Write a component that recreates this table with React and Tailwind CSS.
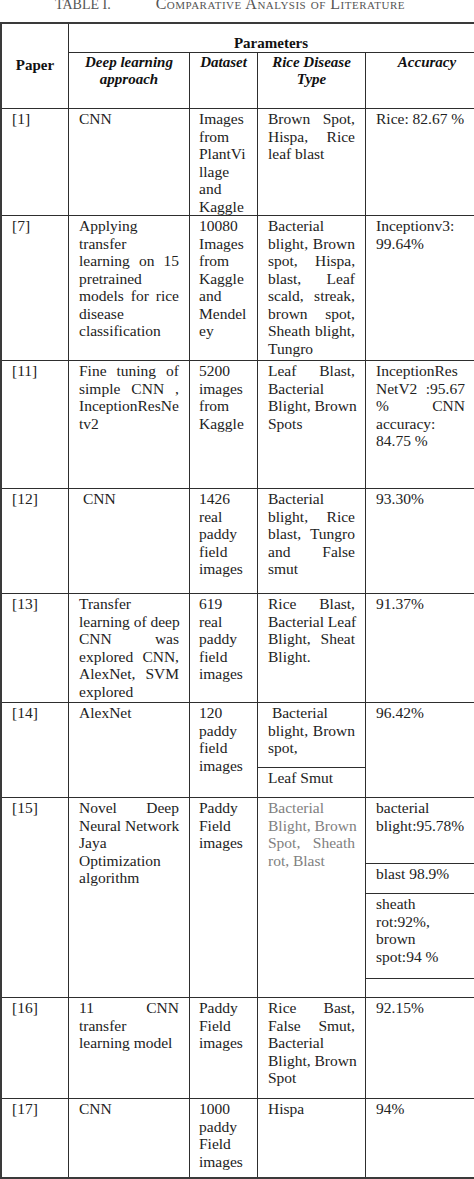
const line = 'border-[#2e2e2e]'

const Lines = ({ lines }) =>
  lines.map((l, i) =>
    l.startsWith('~') ? (
      <div key={i} className="whitespace-pre text-justify [text-align-last:justify]">
        {l.slice(1)}
      </div>
    ) : (
      <div key={i} className="whitespace-pre">
        {l}
      </div>
    )
  )

const rows = [
  {
    h: 'h-[107px]',
    paper: '[1]',
    approach: ['CNN'],
    dataset: ['Images', 'from', 'PlantVi', 'llage', 'and', 'Kaggle'],
    disease: ['~Brown Spot,', '~Hispa, Rice', 'leaf blast'],
    accuracy: ['Rice: 82.67 %'],
  },
  {
    h: 'h-[145px]',
    paper: '[7]',
    approach: ['Applying', 'transfer', '~learning on 15', 'pretrained', '~models for rice', 'disease', 'classification'],
    dataset: ['10080', 'Images', 'from', 'Kaggle', 'and', 'Mendel', 'ey'],
    disease: ['Bacterial', '~blight, Brown', '~spot, Hispa,', '~blast, Leaf', '~scald, streak,', '~brown spot,', '~Sheath blight,', 'Tungro'],
    accuracy: ['Inceptionv3:', '99.64%'],
  },
  {
    h: 'h-[128px]',
    paper: '[11]',
    approach: ['~Fine tuning of', '~simple CNN ,', 'InceptionResNe', 'tv2'],
    dataset: ['5200', 'images', 'from', 'Kaggle'],
    disease: ['~Leaf Blast,', 'Bacterial', 'Blight, Brown', 'Spots'],
    accuracy: ['InceptionRes', '~NetV2 :95.67', '~% CNN', 'accuracy:', '84.75 %'],
  },
  {
    h: 'h-[105px]',
    paper: '[12]',
    approach: [' CNN'],
    dataset: ['1426', 'real', 'paddy', 'field', 'images'],
    disease: ['Bacterial', '~blight, Rice', '~blast, Tungro', '~and False', 'smut'],
    accuracy: ['93.30%'],
  },
  {
    h: 'h-[109px]',
    paper: '[13]',
    approach: ['Transfer', 'learning of deep', '~CNN was', '~explored CNN,', '~AlexNet, SVM', 'explored'],
    dataset: ['619', 'real', 'paddy', 'field', 'images'],
    disease: ['~Rice Blast,', 'Bacterial Leaf', '~Blight, Sheat', 'Blight.'],
    accuracy: ['91.37%'],
  },
  {
    h: 'h-[95px]',
    paper: '[14]',
    approach: ['AlexNet'],
    dataset: ['120', 'paddy', 'field', 'images'],
    diseaseSplit: true,
    accuracy: ['96.42%'],
  },
  {
    h: 'h-[200px]',
    paper: '[15]',
    approach: ['~Novel Deep', 'Neural Network', 'Jaya', 'Optimization', 'algorithm'],
    dataset: ['Paddy', 'Field', 'images'],
    disease: ['Bacterial', 'Blight, Brown', '~Spot, Sheath', 'rot, Blast'],
    grey: true,
    accuracySplit: true,
  },
  {
    h: 'h-[101px]',
    paper: '[16]',
    approach: ['~11 CNN', 'transfer', 'learning model'],
    dataset: ['Paddy', 'Field', 'images'],
    disease: ['~Rice Bast,', '~False Smut,', 'Bacterial', 'Blight, Brown', 'Spot'],
    accuracy: ['92.15%'],
  },
  {
    h: 'h-[78px]',
    paper: '[17]',
    approach: ['CNN'],
    dataset: ['1000', 'paddy', 'Field', 'images'],
    disease: ['Hispa'],
    accuracy: ['94%'],
    last: true,
  },
]

const cell = `border-r ${line} px-[10px] pt-[1px]`

const Row = ({ r }) => (
  <div
    className={`grid grid-cols-[67px_121px_68px_108px_1fr] ${r.h} ${r.last ? '' : `border-b ${line}`}`}
  >
    <div className={cell}>{r.paper}</div>
    <div className={cell}>
      <Lines lines={r.approach} />
    </div>
    <div className={`border-r ${line} pl-[9px] pr-[8px] pt-[1px]`}>
      <Lines lines={r.dataset} />
    </div>
    {r.diseaseSplit ? (
      <div className={`flex flex-col border-r ${line}`}>
        <div className={`h-[65px] border-b ${line} px-[10px] pt-[1px]`}>
          <Lines lines={[' Bacterial', '~blight, Brown', 'spot,']} />
        </div>
        <div className="px-[10px] pt-[1px]">Leaf Smut</div>
      </div>
    ) : (
      <div className={`${cell} ${r.grey ? 'text-[#808080]' : ''}`}>
        <Lines lines={r.disease} />
      </div>
    )}
    {r.accuracySplit ? (
      <div className="flex flex-col">
        <div className={`h-[66px] border-b ${line} pl-[10px] pr-[17px] pt-[1px]`}>
          <Lines lines={['bacterial', 'blight:95.78%']} />
        </div>
        <div className={`h-[30px] border-b ${line} pl-[10px] pr-[17px] pt-[1px]`}>blast 98.9%</div>
        <div className={`h-[85px] border-b ${line} pl-[10px] pr-[17px] pt-[1px]`}>
          <Lines lines={['sheath', 'rot:92%,', 'brown', 'spot:94 %']} />
        </div>
      </div>
    ) : (
      <div className="pl-[10px] pr-[17px] pt-[1px]">
        <Lines lines={r.accuracy} />
      </div>
    )}
  </div>
)

export default function App() {
  return (
    <div className="w-[474px] h-[1179px] overflow-hidden bg-white [font-family:'Liberation_Serif','Times_New_Roman',serif]">
      <div className="h-[22px] overflow-hidden">
        <div className="-mt-[4px] flex items-baseline leading-[16px] text-[#555] [font-variant:small-caps]">
          <span className="ml-[55px] text-[14px]">TABLE I.</span>
          <span className="ml-[45px] text-[16px] tracking-[0.5px]">Comparative Analysis of Literature</span>
        </div>
      </div>
      <div className="w-[482px] border-t-2 border-b-2 border-l-2 border-[#3a3a3a] text-[15.5px] leading-[17.5px] text-[#222]">
        <div
          className={`grid grid-cols-[67px_121px_68px_108px_1fr] grid-rows-[29px_55px] border-b ${line} text-[15px] leading-[16.6px] font-bold text-[#111]`}
        >
          <div className={`row-span-2 flex items-center justify-center border-r ${line} pb-[2px]`}>
            Paper
          </div>
          <div className={`col-span-4 border-b ${line} pt-[11px] pr-[9px] text-center`}>
            Parameters
          </div>
          <div className={`border-r ${line} px-[8px] pt-[1px] text-center italic`}>
            Deep learning
            <br />
            approach
          </div>
          <div className={`border-r ${line} pt-[1px] text-center italic`}>Dataset</div>
          <div className={`border-r ${line} pt-[1px] text-center italic`}>
            Rice Disease
            <br />
            Type
          </div>
          <div className="pt-[1px] pl-[6px] text-center italic">Accuracy</div>
        </div>
        {rows.map((r) => (
          <Row key={r.paper} r={r} />
        ))}
      </div>
    </div>
  )
}
